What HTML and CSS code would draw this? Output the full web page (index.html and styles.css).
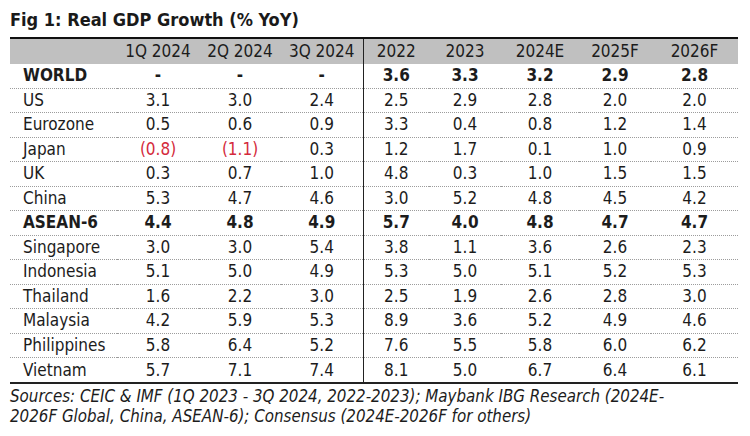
FILE: index.html
```html
<!DOCTYPE html>
<html>
<head>
<meta charset="utf-8">
<link rel="stylesheet" href="styles.css">
</head>
<body>
<div class="fig">
  <div class="title">Fig 1: Real GDP Growth (% YoY)</div>
  <table class="gdp">
    <colgroup>
      <col class="c-label"><col class="c-q"><col class="c-q"><col class="c-q">
      <col class="c-y1"><col class="c-y2"><col class="c-y3"><col class="c-y4"><col class="c-y5">
    </colgroup>
    <thead>
      <tr><th></th><th>1Q 2024</th><th>2Q 2024</th><th class="sep">3Q 2024</th><th>2022</th><th>2023</th><th>2024E</th><th>2025F</th><th>2026F</th></tr>
    </thead>
    <tbody>
      <tr class="bold"><td>WORLD</td><td>-</td><td>-</td><td class="sep">-</td><td>3.6</td><td>3.3</td><td>3.2</td><td>2.9</td><td>2.8</td></tr>
      <tr><td>US</td><td>3.1</td><td>3.0</td><td class="sep">2.4</td><td>2.5</td><td>2.9</td><td>2.8</td><td>2.0</td><td>2.0</td></tr>
      <tr><td>Eurozone</td><td>0.5</td><td>0.6</td><td class="sep">0.9</td><td>3.3</td><td>0.4</td><td>0.8</td><td>1.2</td><td>1.4</td></tr>
      <tr><td>Japan</td><td class="neg">(0.8)</td><td class="neg">(1.1)</td><td class="sep">0.3</td><td>1.2</td><td>1.7</td><td>0.1</td><td>1.0</td><td>0.9</td></tr>
      <tr><td>UK</td><td>0.3</td><td>0.7</td><td class="sep">1.0</td><td>4.8</td><td>0.3</td><td>1.0</td><td>1.5</td><td>1.5</td></tr>
      <tr><td>China</td><td>5.3</td><td>4.7</td><td class="sep">4.6</td><td>3.0</td><td>5.2</td><td>4.8</td><td>4.5</td><td>4.2</td></tr>
      <tr class="bold"><td>ASEAN-6</td><td>4.4</td><td>4.8</td><td class="sep">4.9</td><td>5.7</td><td>4.0</td><td>4.8</td><td>4.7</td><td>4.7</td></tr>
      <tr><td>Singapore</td><td>3.0</td><td>3.0</td><td class="sep">5.4</td><td>3.8</td><td>1.1</td><td>3.6</td><td>2.6</td><td>2.3</td></tr>
      <tr><td>Indonesia</td><td>5.1</td><td>5.0</td><td class="sep">4.9</td><td>5.3</td><td>5.0</td><td>5.1</td><td>5.2</td><td>5.3</td></tr>
      <tr><td>Thailand</td><td>1.6</td><td>2.2</td><td class="sep">3.0</td><td>2.5</td><td>1.9</td><td>2.6</td><td>2.8</td><td>3.0</td></tr>
      <tr><td>Malaysia</td><td>4.2</td><td>5.9</td><td class="sep">5.3</td><td>8.9</td><td>3.6</td><td>5.2</td><td>4.9</td><td>4.6</td></tr>
      <tr><td>Philippines</td><td>5.8</td><td>6.4</td><td class="sep">5.2</td><td>7.6</td><td>5.5</td><td>5.8</td><td>6.0</td><td>6.2</td></tr>
      <tr class="last"><td>Vietnam</td><td>5.7</td><td>7.1</td><td class="sep">7.4</td><td>8.1</td><td>5.0</td><td>6.7</td><td>6.4</td><td>6.1</td></tr>
    </tbody>
  </table>
  <p class="source">Sources: CEIC &amp; IMF (1Q 2023 - 3Q 2024, 2022-2023); Maybank IBG Research (2024E-<br>2026F Global, China, ASEAN-6); Consensus (2024E-2026F for others)</p>
</div>
</body>
</html>
```
FILE: styles.css
```css
html, body {
  margin: 0;
  padding: 0;
  background: #ffffff;
}
body {
  font-family: "DejaVu Sans Condensed", "DejaVu Sans", sans-serif;
  font-stretch: condensed;
  color: #1c1c1c;
}
.fig {
  padding: 8px 0 0 10px;
  width: 728px;
}
.title {
  font-size: 18px;
  font-weight: bold;
  line-height: 24px;
  margin-bottom: 5px;
  color: #1a1a1a;
}
.gdp {
  border-collapse: collapse;
  table-layout: fixed;
  width: 728px;
  font-size: 17px;
  border-top: 2px solid #111;
  border-bottom: 2px solid #222;
}
.c-label { width: 107px; }
.c-q { width: 82px; }
.c-y1 { width: 66px; }
.c-y2 { width: 72px; }
.c-y3 { width: 78px; }
.c-y4 { width: 72px; }
.c-y5 { width: 87px; }
.gdp th {
  background: #c0c0c0;
  font-weight: normal;
  height: 25px;
  padding: 0;
  text-align: center;
  line-height: 25px;
}
.gdp td {
  height: 23.5px;
  padding: 0;
  text-align: center;
  line-height: 23px;
  border-bottom: 1px dotted #9c9c9c;
}
.gdp tr.last td {
  border-bottom: none;
  height: 24px;
}
.gdp td:first-child {
  text-align: left;
  padding-left: 13px;
}
.gdp .sep {
  border-right: 1px solid #222;
}
.gdp tr.bold td {
  font-weight: bold;
}
.gdp td.neg {
  color: #d42a3c;
}
.source {
  margin: 2px 0 0 0;
  font-size: 16.8px;
  font-style: italic;
  line-height: 20px;
  color: #1c1c1c;
}
```
